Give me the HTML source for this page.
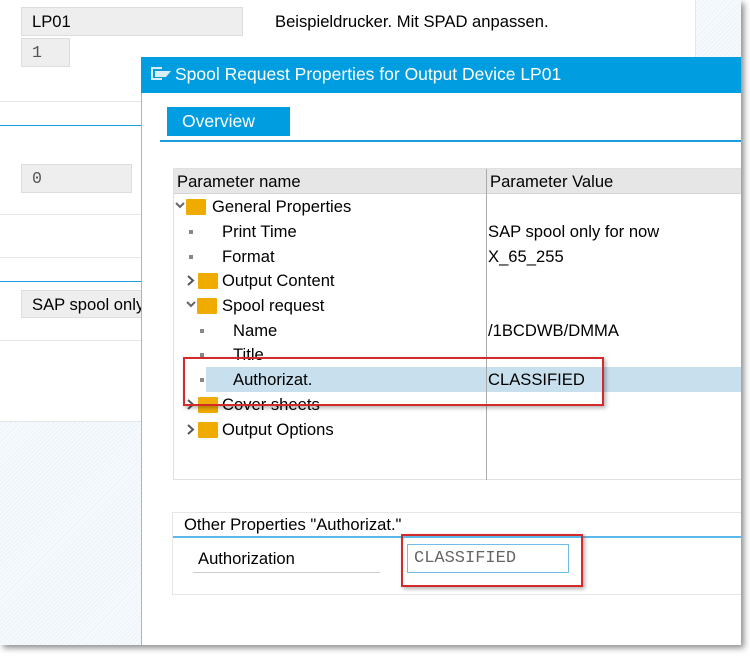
<!DOCTYPE html>
<html><head><meta charset="utf-8"><style>
*{margin:0;padding:0;box-sizing:border-box}
body{width:750px;height:656px;background:#fff;position:relative;overflow:hidden;font-family:"Liberation Sans",sans-serif;font-size:16.6px;color:#000}
.a{position:absolute}
.fld{position:absolute;background:#eee;border:1px solid #ddd;padding-left:10px;line-height:27px}
.hl{position:absolute;height:1px;background:#e6e6e6}
.bl{position:absolute;height:1px;background:#1a9ee0}
.hatch{background:repeating-linear-gradient(135deg,#f7fafd 0 2px,#eaf2fa 2px 3px)}
.row{position:absolute;left:0;height:25px;line-height:25px;white-space:nowrap}
.dot{position:absolute;width:4px;height:4px;background:#888;top:11px}
.fold{position:absolute;top:5px;width:20px;height:16px;background:#f0ab00;border-radius:1px}
.arr{position:absolute;top:7px}
</style></head><body>
<div class="a" style="left:0;top:0;width:741px;height:645px;box-shadow:3px 3px 6px rgba(0,0,0,.45)"></div>
<div class="a" style="left:0;top:0;width:741px;height:645px;background:#fff"></div>
<div class="a hatch" style="left:695px;top:0;width:46px;height:57px;border-left:1px solid #e6e6e6"></div>
<div class="fld" style="left:21px;top:7px;width:222px;height:29px">LP01</div>
<div class="a" style="left:275px;top:7px;line-height:29px">Beispieldrucker. Mit SPAD anpassen.</div>
<div class="fld" style="left:21px;top:38px;width:49px;height:29px;font-family:'Liberation Mono',monospace;color:#555">1</div>
<div class="hl" style="left:0;top:101px;width:141px"></div>
<div class="bl" style="left:0;top:125px;width:141px"></div>
<div class="fld" style="left:21px;top:164px;width:111px;height:29px;font-family:'Liberation Mono',monospace;color:#555">0</div>
<div class="hl" style="left:0;top:214px;width:141px"></div>
<div class="hl" style="left:0;top:257px;width:141px"></div>
<div class="bl" style="left:0;top:281px;width:141px"></div>
<div class="fld" style="left:21px;top:290px;width:125px;height:28px;overflow:hidden;white-space:nowrap">SAP spool only</div>
<div class="hl" style="left:0;top:340px;width:141px"></div>
<div class="hl" style="left:0;top:421px;width:141px"></div>
<div class="a hatch" style="left:0;top:422px;width:141px;height:223px"></div>
<div class="a" style="left:141px;top:57px;width:600px;height:588px;background:#fff;border-left:1px solid #7cc3ea"></div>
<div class="a" style="left:141px;top:57px;width:600px;height:36px;background:#009de0;color:#fff;font-size:17.5px;line-height:34px;padding-left:34px">Spool Request Properties for Output Device LP01</div>
<svg class="a" style="left:150px;top:66px" width="22" height="16"><path d="M1 1h11v2H3v9h9v2H1z" fill="#d8eefa"/><path d="M5 5h16l-5 6H5z" fill="#d8eefa"/></svg>
<div class="a" style="left:167px;top:107px;width:123px;height:29px;background:#009de0;color:#fff;font-size:17.5px;line-height:29px;padding-left:15px">Overview</div>
<div class="bl" style="left:160px;top:140px;width:581px;height:2px"></div>
<div class="a" style="left:173px;top:168px;width:568px;height:312px;border:1px solid #e0e0e0;border-right:none"></div>
<div class="a" style="left:174px;top:169px;width:567px;height:25px;background:#e6e6e6;border-bottom:1px solid #d5d5d5"></div>
<div class="a" style="left:177px;top:169px;line-height:25px">Parameter name</div>
<div class="a" style="left:490px;top:169px;line-height:25px">Parameter Value</div>
<div class="a" style="left:206px;top:367px;width:535px;height:25px;background:#c8e0ed"></div>
<div class="a" style="left:486px;top:169px;width:1px;height:311px;background:#aaa"></div>
<div class="a" style="left:174px;top:194px;width:560px;height:260px">
 <div class="row" style="top:0"><svg class="arr" style="left:1px;top:8px" width="10" height="8"><path d="M1 1l4 4 4-4" stroke="#666" stroke-width="2" fill="none"/></svg><div class="fold" style="left:12px"></div><span style="position:absolute;left:38px">General Properties</span></div>
 <div class="row" style="top:25px"><div class="dot" style="left:15px"></div><span style="position:absolute;left:48px">Print Time</span><span style="position:absolute;left:314px">SAP spool only for now</span></div>
 <div class="row" style="top:50px"><div class="dot" style="left:15px"></div><span style="position:absolute;left:48px">Format</span><span style="position:absolute;left:314px">X_65_255</span></div>
 <div class="row" style="top:74px"><svg class="arr" style="left:13px" width="8" height="11"><path d="M1 1l5 4.5L1 10" stroke="#555" stroke-width="2" fill="none"/></svg><div class="fold" style="left:24px"></div><span style="position:absolute;left:48px">Output Content</span></div>
 <div class="row" style="top:99px"><svg class="arr" style="left:12px;top:8px" width="10" height="8"><path d="M1 1l4 4 4-4" stroke="#666" stroke-width="2" fill="none"/></svg><div class="fold" style="left:23px"></div><span style="position:absolute;left:48px">Spool request</span></div>
 <div class="row" style="top:124px"><div class="dot" style="left:26px"></div><span style="position:absolute;left:59px">Name</span><span style="position:absolute;left:314px">/1BCDWB/DMMA</span></div>
 <div class="row" style="top:148px"><div class="dot" style="left:26px"></div><span style="position:absolute;left:59px">Title</span></div>
 <div class="row" style="top:173px"><div class="dot" style="left:26px"></div><span style="position:absolute;left:59px">Authorizat.</span><span style="position:absolute;left:314px">CLASSIFIED</span></div>
 <div class="row" style="top:198px"><svg class="arr" style="left:13px" width="8" height="11"><path d="M1 1l5 4.5L1 10" stroke="#555" stroke-width="2" fill="none"/></svg><div class="fold" style="left:24px"></div><span style="position:absolute;left:48px">Cover sheets</span></div>
 <div class="row" style="top:223px"><svg class="arr" style="left:13px" width="8" height="11"><path d="M1 1l5 4.5L1 10" stroke="#555" stroke-width="2" fill="none"/></svg><div class="fold" style="left:24px"></div><span style="position:absolute;left:48px">Output Options</span></div>
</div>
<div class="a" style="left:183px;top:357px;width:421px;height:49px;border:2px solid #d42a2a;box-shadow:2px 2px 4px rgba(0,0,0,.3)"></div>
<div class="a" style="left:172px;top:512px;width:569px;height:83px;border:1px solid #e6e6e6;border-right:none"></div>
<div class="a" style="left:184px;top:513px;line-height:23px">Other Properties "Authorizat."</div>
<div class="bl" style="left:173px;top:536px;width:568px;height:2px;background:#5bb8e8"></div>
<div class="a" style="left:198px;top:547px;line-height:24px">Authorization</div>
<div class="hl" style="left:193px;top:572px;width:187px;background:#ccc"></div>
<div class="a" style="left:401px;top:534px;width:182px;height:53px;border:2px solid #d42a2a;box-shadow:2px 2px 4px rgba(0,0,0,.3)"></div>
<div class="a" style="left:407px;top:544px;width:162px;height:29px;border:1px solid #72bde8;background:#fff;font-family:'Liberation Mono',monospace;color:#666;font-size:17px;line-height:27px;padding-left:6px">CLASSIFIED</div>
</body></html>
